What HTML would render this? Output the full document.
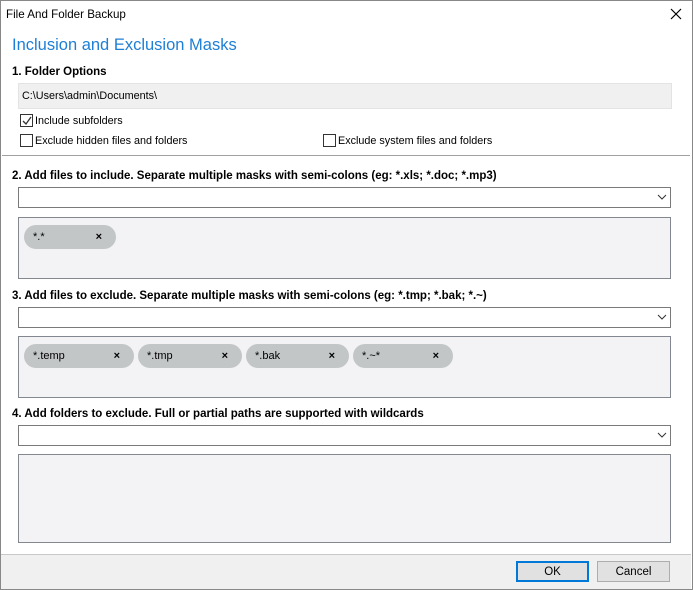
<!DOCTYPE html><html><head><style>
body{margin:0;width:693px;height:590px;overflow:hidden;font-family:"Liberation Sans",sans-serif;font-size:10.8px;color:#000;background:#fff;position:relative}
.a{position:absolute}
.b{font-weight:bold;font-size:11.5px}
.combo{position:absolute;left:18px;width:651px;height:19px;border:1px solid #7a7a7a;background:#fff}
.combo svg{position:absolute;right:3px;top:6px}
.area{position:absolute;left:18px;width:651px;border:1px solid #828790;background:#f3f3f5}
.tag{position:absolute;top:7px;height:24px;border-radius:12px;background:#c2c6c7;line-height:24px;font-size:11px}
.tag span{position:absolute;left:9px}
.tag i{position:absolute;right:14px;font-style:normal;font-weight:bold;font-size:11px}
.cb{position:absolute;width:11px;height:11px;border:1px solid #333;background:#fff}
</style></head><body>
<div class="a" style="left:0;top:0;width:691px;height:588px;border:1px solid #888"></div>
<div class="a" style="left:6px;top:8px;font-size:11.6px">File And Folder Backup</div>
<svg class="a" style="left:670px;top:8px" width="12" height="12"><path d="M1 1L11 11M11 1L1 11" stroke="#000" stroke-width="1.2"/></svg>
<div class="a" style="left:12px;top:36px;font-size:16.5px;color:#1e7fd6">Inclusion and Exclusion Masks</div>
<div class="a b" style="left:12px;top:66px">1. Folder Options</div>
<div class="a" style="left:18px;top:83px;width:652px;height:24px;background:#f0f0f0;border:1px solid #e3e3e3;line-height:25px"><span style="margin-left:3px">C:\Users\admin\Documents\</span></div>
<div class="cb" style="left:20px;top:114px"></div>
<svg class="a" style="left:21px;top:115px" width="12" height="12"><path d="M2 6L5 9L10 2" stroke="#333" fill="none" stroke-width="1.3"/></svg>
<div class="a" style="left:35px;top:115px">Include subfolders</div>
<div class="cb" style="left:20px;top:134px"></div>
<div class="a" style="left:35px;top:135px">Exclude hidden files and folders</div>
<div class="cb" style="left:323px;top:134px"></div>
<div class="a" style="left:338px;top:135px">Exclude system files and folders</div>
<div class="a" style="left:2px;top:155px;width:688px;height:1px;background:#a0a0a0"></div>

<div class="a b" style="left:12px;top:170px">2. Add files to include. Separate multiple masks with semi-colons (eg: *.xls; *.doc; *.mp3)</div>
<div class="combo" style="top:187px"><svg width="10" height="7"><path d="M1 1L5 5L9 1" stroke="#333" fill="none"/></svg></div>
<div class="area" style="top:217px;height:60px"><div class="tag" style="left:5px;width:92px"><span>*.*</span><i>×</i></div></div>

<div class="a b" style="left:12px;top:290px">3. Add files to exclude. Separate multiple masks with semi-colons (eg: *.tmp; *.bak; *.~)</div>
<div class="combo" style="top:307px"><svg width="10" height="7"><path d="M1 1L5 5L9 1" stroke="#333" fill="none"/></svg></div>
<div class="area" style="top:336px;height:60px">
<div class="tag" style="left:5px;width:110px"><span>*.temp</span><i>×</i></div>
<div class="tag" style="left:119px;width:104px"><span>*.tmp</span><i>×</i></div>
<div class="tag" style="left:227px;width:103px"><span>*.bak</span><i>×</i></div>
<div class="tag" style="left:334px;width:100px"><span>*.~*</span><i>×</i></div>
</div>

<div class="a b" style="left:12px;top:408px">4. Add folders to exclude. Full or partial paths are supported with wildcards</div>
<div class="combo" style="top:425px"><svg width="10" height="7"><path d="M1 1L5 5L9 1" stroke="#333" fill="none"/></svg></div>
<div class="area" style="top:454px;height:87px"></div>

<div class="a" style="left:1px;top:554px;width:690px;height:34px;background:#f0f0f0;border-top:1px solid #c8c8c8"></div>
<div class="a" style="left:516px;top:561px;width:69px;height:17px;border:2px solid #0078d7;background:#e1e1e1;text-align:center;line-height:19px;font-size:11.5px">OK</div>
<div class="a" style="left:597px;top:561px;width:71px;height:19px;border:1px solid #adadad;background:#e1e1e1;text-align:center;line-height:21px;font-size:11.5px">Cancel</div>
</body></html>
